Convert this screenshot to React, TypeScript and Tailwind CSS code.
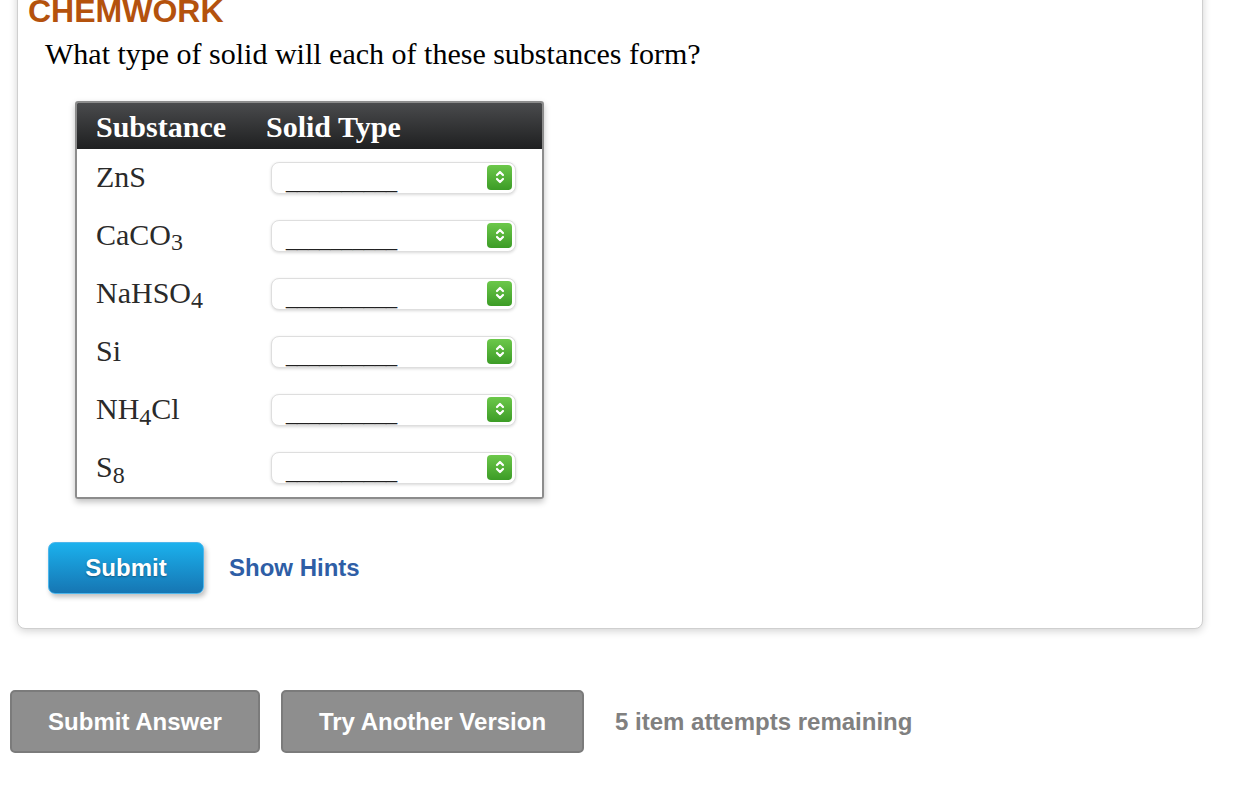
import React from "react";

const serif = "font-['Liberation_Serif','Times_New_Roman',serif]";

const rows: { name: React.ReactNode }[] = [
    { name: <>ZnS</> },
    { name: <>CaCO<sub className="text-[24px] relative top-[5px] align-baseline">3</sub></> },
    { name: <>NaHSO<sub className="text-[24px] relative top-[5px] align-baseline">4</sub></> },
    { name: <>Si</> },
    { name: <>NH<sub className="text-[24px] relative top-[6px] align-baseline">4</sub>Cl</> },
    { name: <>S<sub className="text-[24px] relative top-[6px] align-baseline">8</sub></> },
];

function Chevrons() {
    return (
        <span className="flex h-[25px] w-[25px] items-center justify-center rounded-[4px] bg-gradient-to-b from-[#6cc84a] to-[#3c9c26]">
            <svg width="10" height="16" viewBox="0 0 10 16" fill="none" stroke="white" strokeWidth="2.2" strokeLinecap="round" strokeLinejoin="round">
                <path d="M2 6 L5 3 L8 6" />
                <path d="M2 10 L5 13 L8 10" />
            </svg>
        </span>
    );
}

function SolidSelect() {
    return (
        <div className="flex h-[32px] w-[245px] items-end justify-between rounded-[8px] border border-[#dedede] bg-white pl-[14px] pr-[3px] pb-[2px] shadow-[0_1px_3px_rgba(0,0,0,0.15)]">
            <span className="font-['Liberation_Sans',Arial,sans-serif] text-[20px] leading-[20px] text-[#222]">__________</span>
            <span className="self-center">
                <Chevrons />
            </span>
        </div>
    );
}

export default function App() {
    return (
        <main className="min-h-screen bg-white font-['Liberation_Sans',Arial,sans-serif]">
            {/* Question card */}
            <div className="pl-[17px] pr-[43px]">
                <section className="-mt-[12px] rounded-b-[8px] border border-[#cfcfcf] bg-white pb-[34px] shadow-[0_2px_8px_rgba(0,0,0,0.18)]">
                    <h1 className="pl-[10px] pt-[6px] text-[32px] font-bold leading-[32px] text-[#b4520d]">CHEMWORK</h1>
                    <p className={`${serif} pl-[27px] pt-[9px] text-[30px] leading-[36px] text-black`}>
                        What type of solid will each of these substances form?
                    </p>

                    <div className="ml-[57px] mt-[29px] w-[469px] overflow-hidden rounded-[3px] border-2 border-[#8c8c8c] shadow-[0_3px_6px_rgba(0,0,0,0.25)]">
                        <div className={`${serif} flex h-[46px] items-center bg-gradient-to-b from-[#4a4b4d] to-[#1f2021] text-[30px] font-bold text-white`}>
                            <span className="w-[189px] pl-[19px]">Substance</span>
                            <span>Solid Type</span>
                        </div>
                        <div className="bg-white">
                            {rows.map((r, i) => (
                                <div key={i} className="flex h-[58px] items-center">
                                    <span className={`${serif} w-[194px] pl-[19px] text-[30px] leading-[30px] text-[#2a2a2a] -mt-[2px]`}>{r.name}</span>
                                    <SolidSelect />
                                </div>
                            ))}
                        </div>
                    </div>

                    <div className="mt-[43px] flex items-center gap-[25px] pl-[30px]">
                        <button className="h-[52px] w-[156px] rounded-[7px] border border-[#4db6ec] bg-gradient-to-b from-[#1bb1ed] to-[#1676b3] text-[24px] font-bold text-white [text-shadow:0_1px_2px_rgba(0,0,0,0.35)] shadow-[2px_3px_5px_rgba(0,0,0,0.25)]">
                            Submit
                        </button>
                        <span className="text-[24px] font-bold text-[#2e5ea6]">Show Hints</span>
                    </div>
                </section>
            </div>

            {/* Footer actions */}
            <div className="mt-[61px] flex items-center pl-[10px]">
                <button className="h-[63px] w-[250px] rounded-[5px] border-2 border-[#7b7b7b] bg-[#8e8e8e] text-[24px] font-bold text-white">
                    Submit Answer
                </button>
                <button className="ml-[21px] h-[63px] w-[303px] rounded-[5px] border-2 border-[#7b7b7b] bg-[#8e8e8e] text-[24px] font-bold text-white">
                    Try Another Version
                </button>
                <span className="ml-[31px] text-[24px] font-bold text-[#808080]">5 item attempts remaining</span>
            </div>
        </main>
    );
}
